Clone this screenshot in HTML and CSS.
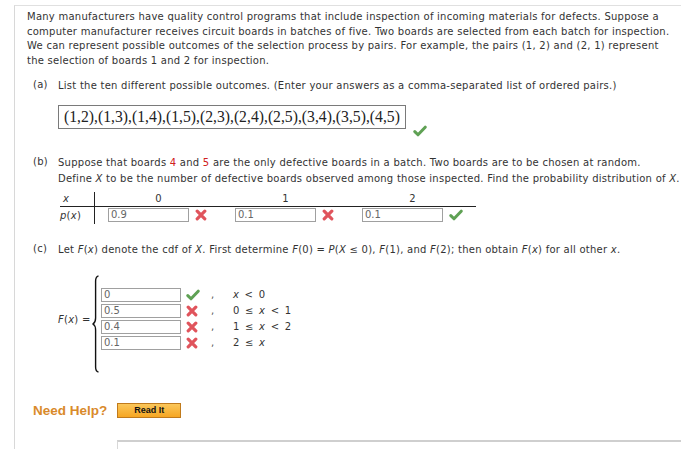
FILE: index.html
```html
<!DOCTYPE html>
<html>
<head>
<meta charset="utf-8">
<link rel="stylesheet" href="styles.css">
</head>
<body>
<div class="page">
  <div class="content">
    <p class="intro">Many manufacturers have quality control programs that include inspection of incoming materials for defects. Suppose a computer manufacturer receives circuit boards in batches of five. Two boards are selected from each batch for inspection. We can represent possible outcomes of the selection process by pairs. For example, the pairs (1, 2) and (2, 1) represent the selection of boards 1 and 2 for inspection.</p>

    <div class="part part-a">
      <span class="label">(a)</span>
      <div class="body">
        <p class="q">List the ten different possible outcomes. (Enter your answers as a comma-separated list of ordered pairs.)</p>
        <div class="answer-row">
          <div class="answer-box">(1,2),(1,3),(1,4),(1,5),(2,3),(2,4),(2,5),(3,4),(3,5),(4,5)</div>
          <svg class="icon check low" width="14" height="12" viewBox="0 0 14 12"><path d="M1.8 6.6 L5 9.8 L12.2 2.2" fill="none" stroke="#5fa154" stroke-width="3" stroke-linecap="round" stroke-linejoin="round"/></svg>
        </div>
      </div>
    </div>

    <div class="part part-b">
      <span class="label">(b)</span>
      <div class="body">
        <p class="q">Suppose that boards <span class="red">4</span> and <span class="red">5</span> are the only defective boards in a batch. Two boards are to be chosen at random.<br>Define <i>X</i> to be the number of defective boards observed among those inspected. Find the probability distribution of <i>X</i>.</p>
        <div class="dist">
          <div class="cell head lab"><i>x</i></div>
          <div class="cell head">0</div>
          <div class="cell head">1</div>
          <div class="cell head">2</div>
          <div class="cell lab2"><i>p</i>(<i>x</i>)</div>
          <div class="cell val first">
            <span class="inp">0.9</span>
            <svg class="icon" width="12" height="12" viewBox="0 0 12 12"><path d="M2.2 2.2 L9.8 9.8 M9.8 2.2 L2.2 9.8" stroke="#e0545c" stroke-width="3.2" stroke-linecap="round"/></svg>
          </div>
          <div class="cell val">
            <span class="inp">0.1</span>
            <svg class="icon" width="12" height="12" viewBox="0 0 12 12"><path d="M2.2 2.2 L9.8 9.8 M9.8 2.2 L2.2 9.8" stroke="#e0545c" stroke-width="3.2" stroke-linecap="round"/></svg>
          </div>
          <div class="cell val">
            <span class="inp">0.1</span>
            <svg class="icon" width="14" height="12" viewBox="0 0 14 12"><path d="M1.8 6.6 L5 9.8 L12.2 2.2" fill="none" stroke="#5fa154" stroke-width="3" stroke-linecap="round" stroke-linejoin="round"/></svg>
          </div>
        </div>
      </div>
    </div>

    <div class="part part-c">
      <span class="label">(c)</span>
      <div class="body">
        <p class="q">Let <i>F</i>(<i>x</i>) denote the cdf of <i>X</i>. First determine <i>F</i>(0) = <i>P</i>(<i>X</i> ≤ 0), <i>F</i>(1), and <i>F</i>(2); then obtain <i>F</i>(<i>x</i>) for all other <i>x</i>.</p>
        <div class="cdf">
          <div class="fx"><i>F</i>(<i>x</i>) =</div>
          <svg class="brace" width="8" height="98" viewBox="0 0 8 98"><path d="M6.5 0.8 C4.2 1.5 3.6 3 3.6 6 L3.6 43 C3.6 46.5 2.6 48 1 49 C2.6 50 3.6 51.5 3.6 55 L3.6 92 C3.6 95 4.2 96.5 6.5 97.2" fill="none" stroke="#111" stroke-width="1.4"/></svg>
          <div class="cases">
            <span class="inp">0</span>
            <svg class="icon" width="14" height="12" viewBox="0 0 14 12"><path d="M1.8 6.6 L5 9.8 L12.2 2.2" fill="none" stroke="#5fa154" stroke-width="3" stroke-linecap="round" stroke-linejoin="round"/></svg>
            <span class="comma">,</span>
            <span class="cond"><i>x</i> &lt; 0</span>

            <span class="inp">0.5</span>
            <svg class="icon" width="12" height="12" viewBox="0 0 12 12"><path d="M2.2 2.2 L9.8 9.8 M9.8 2.2 L2.2 9.8" stroke="#e0545c" stroke-width="3.2" stroke-linecap="round"/></svg>
            <span class="comma">,</span>
            <span class="cond">0 ≤ <i>x</i> &lt; 1</span>

            <span class="inp">0.4</span>
            <svg class="icon" width="12" height="12" viewBox="0 0 12 12"><path d="M2.2 2.2 L9.8 9.8 M9.8 2.2 L2.2 9.8" stroke="#e0545c" stroke-width="3.2" stroke-linecap="round"/></svg>
            <span class="comma">,</span>
            <span class="cond">1 ≤ <i>x</i> &lt; 2</span>

            <span class="inp">0.1</span>
            <svg class="icon" width="12" height="12" viewBox="0 0 12 12"><path d="M2.2 2.2 L9.8 9.8 M9.8 2.2 L2.2 9.8" stroke="#e0545c" stroke-width="3.2" stroke-linecap="round"/></svg>
            <span class="comma">,</span>
            <span class="cond">2 ≤ <i>x</i></span>
          </div>
        </div>
      </div>
    </div>

    <div class="help">
      <span class="need">Need Help?</span>
      <span class="read">Read It</span>
    </div>

    <div class="next-box"></div>
  </div>
</div>
</body>
</html>
```

FILE: styles.css
```css
html, body {
  margin: 0;
  padding: 0;
  background: #fff;
}

body {
  font-family: "DejaVu Sans", Verdana, sans-serif;
  font-size: 10px;
  letter-spacing: 0.25px;
  color: #333;
}

.page {
  margin-top: 5px;
  margin-left: 14px;
  border-top: 1px solid #e0e0e0;
  border-left: 1px solid #d8d8d8;
  height: 443px;
  overflow: hidden;
}

.content {
  padding: 4px 0 0 12px;
}

p {
  margin: 0;
}

.intro {
  width: 645px;
  line-height: 14.7px;
}

.part {
  display: flex;
  margin-left: 6px;
}

.label {
  width: 25px;
  flex: none;
  line-height: 14px;
}

.body {
  flex: 1;
}

.q {
  line-height: 16px;
}

.part-a {
  margin-top: 9px;
}

.answer-row {
  display: flex;
  align-items: flex-end;
  margin-top: 11px;
}

.answer-box {
  border: 1px solid #7a7a7a;
  font-family: "Liberation Serif", "Times New Roman", serif;
  font-size: 15.7px;
  letter-spacing: 0;
  line-height: 20px;
  color: #222;
  padding: 1px 5px 1px 5px;
}

.icon {
  display: block;
  flex: none;
}

.low {
  margin-left: 7px;
  margin-bottom: -8px;
}

.red {
  color: #d02020;
}

.part-b {
  margin-top: 26px;
}

.dist {
  display: grid;
  grid-template-columns: 35px 127px 127px 127px;
  margin-top: 5px;
  margin-left: 2px;
}

.cell {
  height: 14px;
}

.head {
  text-align: center;
  border-bottom: 1px solid #222;
  line-height: 14px;
}

.head.lab {
  text-align: left;
  padding-left: 3px;
  border-right: 1px solid #222;
}

.lab2 {
  height: 17px;
  line-height: 17px;
  border-right: 1px solid #222;
}

.val {
  height: 17px;
  display: flex;
  align-items: center;
  gap: 6px;
  padding-left: 13px;
}

.inp {
  display: block;
  box-sizing: border-box;
  width: 81px;
  height: 14px;
  border: 1px solid #a0a0a0;
  color: #666;
  font-size: 10px;
  letter-spacing: 0;
  line-height: 12px;
  padding-left: 2px;
}

.part-c {
  margin-top: 18px;
}

.cdf {
  display: flex;
  align-items: center;
  margin-top: 17px;
}

.fx {
  width: 37px;
  margin-left: 0;
  margin-bottom: 8px;
}

.brace {
  display: block;
  margin-left: -3px;
}

.cases {
  display: grid;
  grid-template-columns: 80px 12px 14px auto;
  grid-auto-rows: 16px;
  column-gap: 5px;
  align-items: center;
  align-self: flex-start;
  margin-top: 12px;
  margin-left: 1px;
}

.cases .inp {
  width: 80px;
}

.comma {
  color: #555;
  padding-left: 8px;
}

.cond {
  padding-left: 11px;
  white-space: pre;
  word-spacing: 2px;
}

.help {
  display: flex;
  align-items: center;
  margin-top: 30px;
  margin-left: 6px;
  gap: 10px;
}

.need {
  font-family: "Liberation Sans", Arial, sans-serif;
  font-weight: bold;
  font-size: 13.5px;
  letter-spacing: 0;
  color: #d98a2b;
  line-height: 16px;
}

.read {
  display: block;
  box-sizing: border-box;
  width: 64px;
  height: 15px;
  border: 1px solid #c07a1c;
  background: linear-gradient(#fbc75a, #f6a623);
  font-family: "Liberation Sans", Arial, sans-serif;
  font-weight: bold;
  font-size: 9px;
  letter-spacing: 0;
  line-height: 13px;
  text-align: center;
  color: #111;
}

.next-box {
  margin-top: 21px;
  margin-left: 90px;
  height: 30px;
  border-top: 2px solid #cfcfcf;
  border-left: 1px solid #d8d8d8;
}
```
